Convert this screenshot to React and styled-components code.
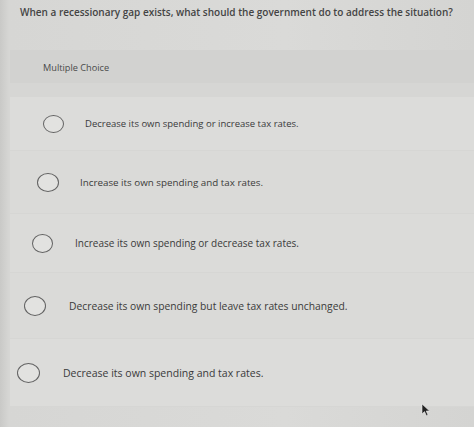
import React from "react";
import styled, { createGlobalStyle } from "styled-components";

const GlobalStyle = createGlobalStyle`
  html, body {
    margin: 0;
    padding: 0;
    background: #cfcfcd;
  }
`;

const options = [
  { text: "Decrease its own spending or increase tax rates.", indent: 33, size: 9.5, height: 54, gap: 21, r: [21, 18], tone: "#dcdcda" },
  { text: "Increase its own spending and tax rates.", indent: 27, size: 9.8, height: 63, gap: 21, r: [22, 19], tone: "#dadad8" },
  { text: "Increase its own spending or decrease tax rates.", indent: 22, size: 10, height: 59, gap: 22, r: [21, 19], tone: "#dbdbd9" },
  { text: "Decrease its own spending but leave tax rates unchanged.", indent: 14, size: 10.3, height: 66, gap: 23, r: [22, 20], tone: "#dadad8" },
  { text: "Decrease its own spending and tax rates.", indent: 7, size: 10.5, height: 68, gap: 23, r: [23, 20], tone: "#dcdcda" },
];

const App = () => {
  return (
    <>
      <GlobalStyle />
      <Page>
        <Question>
          When a recessionary gap exists, what should the government do to address the situation?
        </Question>
        <Panel>
          <Header>Multiple Choice</Header>
          <Spacer />
          {options.map((o, i) => (
            <Row key={i} indent={o.indent} h={o.height} tone={o.tone} gap={o.gap}>
              <Radio w={o.r[0]} ht={o.r[1]} />
              <Label size={o.size}>{o.text}</Label>
            </Row>
          ))}
        </Panel>
        <Cursor viewBox="0 0 10 14">
          <path d="M1 1 L1 11 L3.5 8.6 L5.4 12.8 L7 12 L5.2 8 L8.6 8 Z" fill="#222" stroke="#eee" strokeWidth="0.6" />
        </Cursor>
      </Page>
    </>
  );
};

export default App;

const Page = styled.div`
  position: relative;
  width: 474px;
  height: 427px;
  overflow: hidden;
  background: linear-gradient(90deg, #c9c9c7 0px, #d6d6d4 9px, #dadad8 60%, #d4d4d2 100%);
  font-family: "Open Sans", "Liberation Sans", sans-serif;
  color: #3c3c3c;
  padding-left: 10px;
  box-sizing: border-box;
`;

const Question = styled.div`
  height: 50px;
  padding: 5px 0 0 10px;
  box-sizing: border-box;
  font-size: 10px;
  font-weight: 600;
  color: #444;
  white-space: nowrap;
`;

const Panel = styled.div`
  display: flex;
  flex-direction: column;
`;

const Header = styled.div`
  height: 33px;
  padding: 11px 0 0 33px;
  box-sizing: border-box;
  background: #d2d2d0;
  font-size: 9.2px;
  color: #4a4a4a;
`;

const Spacer = styled.div`
  height: 14px;
  background: #d6d6d4;
`;

const Row = styled.div`
  display: flex;
  align-items: center;
  height: ${(p) => p.h}px;
  padding-left: ${(p) => p.indent}px;
  box-sizing: border-box;
  background: ${(p) => p.tone};
  border-bottom: 1px solid #d6d6d4;
  gap: ${(p) => p.gap}px;
`;

const Radio = styled.span`
  flex: none;
  width: ${(p) => p.w}px;
  height: ${(p) => p.ht}px;
  border-radius: 50%;
  border: 1.2px solid #626262;
  box-sizing: border-box;
  background: #e2e2e0;
`;

const Label = styled.span`
  font-size: ${(p) => p.size}px;
  font-weight: 500;
  color: #3a3a3a;
  white-space: nowrap;
`;

const Cursor = styled.svg`
  position: absolute;
  left: 421px;
  top: 403px;
  width: 10px;
  height: 14px;
`;
